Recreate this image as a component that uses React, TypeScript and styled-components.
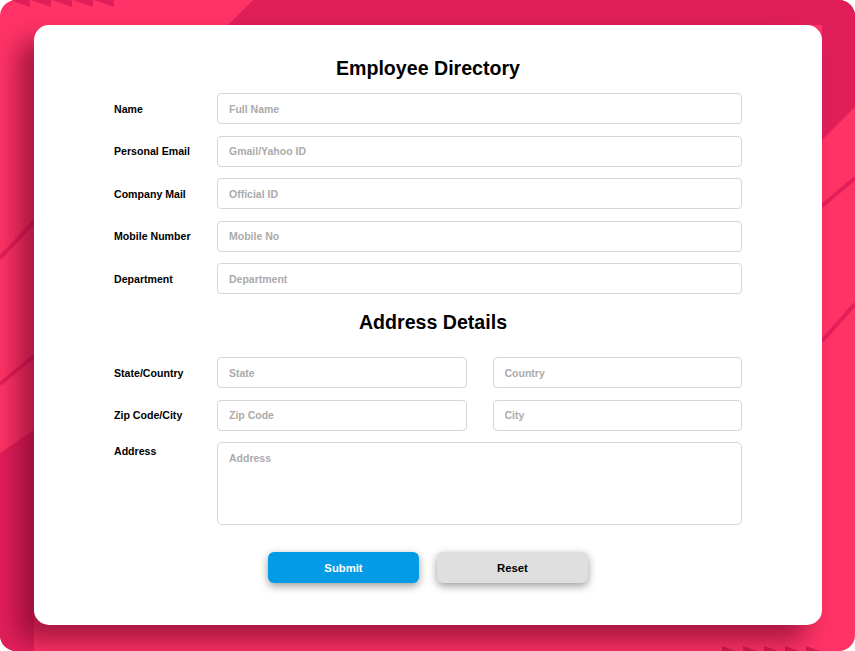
import React from "react"
import styled, { createGlobalStyle } from "styled-components"

const GlobalStyle = createGlobalStyle`
  html, body {
    margin: 0;
    padding: 0;
    background: #ffffff;
  }
  body {
    font-family: "Liberation Sans", Arial, sans-serif;
  }
`

const Frame = styled.div`
  position: relative;
  width: 855px;
  height: 651px;
  box-sizing: border-box;
  padding: 25px 33px 26px 34px;
  border-radius: 16px;
  overflow: hidden;
  background: #ff3366;
`

const Backdrop = styled.svg`
  position: absolute;
  inset: 0;
  width: 100%;
  height: 100%;
`

const Card = styled.main`
  position: relative;
  height: 100%;
  box-sizing: border-box;
  padding: 31px 80px 0;
  background: #ffffff;
  border-radius: 15px;
  box-shadow: -16px 16px 24px rgba(110, 5, 40, 0.6);
  display: flex;
  flex-direction: column;
`

const Heading = styled.h1<{ $gap: number; $shift?: number }>`
  margin: 0 0 ${(p) => p.$gap}px;
  padding-left: ${(p) => p.$shift ?? 0}px;
  font-size: 19.6px;
  line-height: 24px;
  font-weight: 700;
  text-align: center;
  color: #000;
`

const Form = styled.div<{ $below: number }>`
  display: grid;
  grid-template-columns: 103px 1fr;
  row-gap: 11.5px;
  margin-bottom: ${(p) => p.$below}px;
`

const Label = styled.label<{ $top?: boolean }>`
  align-self: ${(p) => (p.$top ? "start" : "center")};
  padding-top: ${(p) => (p.$top ? "3px" : "0")};
  font-size: 10.6px;
  font-weight: 700;
  color: #000;
`

const Pair = styled.div`
  display: grid;
  grid-template-columns: 1fr 1fr;
  column-gap: 26px;
`

const Input = styled.input`
  box-sizing: border-box;
  width: 100%;
  height: 31px;
  padding: 0 11px;
  border: 1px solid #d6d6d6;
  border-radius: 4px;
  background: #fff;
  font-family: "Liberation Sans", Arial, sans-serif;
  font-size: 10.5px;
  font-weight: 700;
  outline: none;

  &::placeholder {
    color: #ababab;
  }
`

const TextArea = styled.textarea`
  box-sizing: border-box;
  width: 100%;
  height: 83px;
  padding: 9px 11px;
  border: 1px solid #d6d6d6;
  border-radius: 5px;
  resize: none;
  font-family: "Liberation Sans", Arial, sans-serif;
  font-size: 10.5px;
  font-weight: 700;
  outline: none;

  &::placeholder {
    color: #ababab;
  }
`

const Actions = styled.div`
  display: flex;
  justify-content: center;
  gap: 18px;
`

const Button = styled.button<{ $primary?: boolean }>`
  width: 151px;
  height: 31px;
  border: none;
  border-radius: 6px;
  background: ${(p) => (p.$primary ? "#039be5" : "#dfdfdf")};
  color: ${(p) => (p.$primary ? "#ffffff" : "#000000")};
  box-shadow: 0 3px 8px rgba(0, 0, 0, 0.4);
  font-family: "Liberation Sans", Arial, sans-serif;
  font-size: 11.3px;
  font-weight: 700;
  cursor: pointer;
`

const teeth = (x0: number, y0: number, count: number, dir: 1 | -1) =>
  Array.from({ length: count }, (_, i) => {
    const x = x0 + i * 21
    return dir === 1
      ? `${x},${y0} ${x + 20},${y0} ${x + 20},${y0 + 7}`
      : `${x},${y0} ${x + 14},${y0 + 5} ${x},${y0 + 5}`
  })

const fields = [
  { label: "Name", placeholder: "Full Name" },
  { label: "Personal Email", placeholder: "Gmail/Yahoo ID" },
  { label: "Company Mail", placeholder: "Official ID" },
  { label: "Mobile Number", placeholder: "Mobile No" },
  { label: "Department", placeholder: "Department" },
]

export default function App() {
  return (
    <>
      <GlobalStyle />
      <Frame>
        <Backdrop viewBox="0 0 855 651" preserveAspectRatio="none">
          <polygon points="228,25 253,0 855,0 855,107 822,140 822,25" fill="#e01f5a" />
          <polygon points="0,453 34,430 34,651 0,651" fill="#e21f5b" />
          <line x1="0" y1="258" x2="34" y2="222" stroke="#e21f5a" strokeWidth="4" />
          <line x1="0" y1="384" x2="34" y2="356" stroke="#e21f5a" strokeWidth="4" />
          <line x1="822" y1="206" x2="855" y2="178" stroke="#e21f5a" strokeWidth="4" />
          <line x1="822" y1="341" x2="855" y2="304" stroke="#e21f5a" strokeWidth="4" />
          {teeth(10, 0, 5, 1).map((pts) => (
            <polygon key={pts} points={pts} fill="#e01f5a" />
          ))}
          {teeth(722, 646, 5, -1).map((pts) => (
            <polygon key={pts} points={pts} fill="#d21c52" />
          ))}
        </Backdrop>

        <Card>
          <Heading $gap={13}>Employee Directory</Heading>
          <Form $below={16}>
            {fields.map((f) => (
              <React.Fragment key={f.label}>
                <Label>{f.label}</Label>
                <Input placeholder={f.placeholder} />
              </React.Fragment>
            ))}
          </Form>

          <Heading $gap={23} $shift={10}>Address Details</Heading>
          <Form $below={27}>
            <Label>State/Country</Label>
            <Pair>
              <Input placeholder="State" />
              <Input placeholder="Country" />
            </Pair>
            <Label>Zip Code/City</Label>
            <Pair>
              <Input placeholder="Zip Code" />
              <Input placeholder="City" />
            </Pair>
            <Label $top>Address</Label>
            <TextArea placeholder="Address" />
          </Form>

          <Actions>
            <Button $primary>Submit</Button>
            <Button>Reset</Button>
          </Actions>
        </Card>
      </Frame>
    </>
  )
}
